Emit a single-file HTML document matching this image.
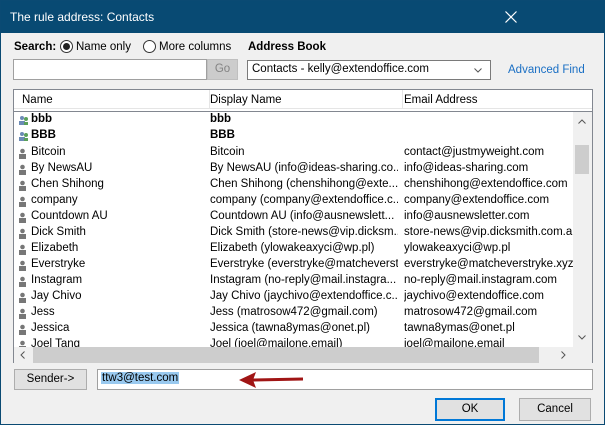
<!DOCTYPE html>
<html><head><style>
*{margin:0;padding:0;box-sizing:border-box}
body{width:605px;height:425px;overflow:hidden;font-family:"Liberation Sans",sans-serif;font-size:11.5px;color:#000;background:#f0f0f0;position:relative}
.win{position:absolute;left:0;top:0;width:605px;height:425px;border:1px solid #0a4a73;background:#f0f0f0}
.title{position:absolute;left:0;top:0;width:605px;height:32px;background:#084a73;color:#fff;font-size:12px}
.a{position:absolute;white-space:nowrap}
.box{position:absolute;background:#fff;border:1px solid #7a7a7a}
.btn{position:absolute;background:#e1e1e1;border:1px solid #adadad;text-align:center}
.radio{position:absolute;width:13px;height:13px;border:1px solid #333;border-radius:50%;background:#fff}
.row{position:absolute;left:0;height:16px;width:558px}
.row span{position:absolute;top:1px;white-space:nowrap;overflow:hidden}
.ic{position:absolute;left:4px;top:3px;width:9px;height:11px}
</style></head><body>
<div class="win">
<div class="title"><span class="a" style="left:9px;top:9px">The rule address: Contacts</span>
<svg class="a" style="left:504px;top:10px" width="12" height="12" viewBox="0 0 12 12"><path d="M0.5 0.5L11.5 11.5M11.5 0.5L0.5 11.5" stroke="#fff" stroke-width="1.2"/></svg></div>

<span class="a" style="left:13px;top:40px;font-weight:bold">Search:</span>
<div class="radio" style="left:59px;top:39px"><div style="position:absolute;left:2px;top:2px;width:7px;height:7px;border-radius:50%;background:#222"></div></div>
<span class="a" style="left:75px;top:40px">Name only</span>
<div class="radio" style="left:142px;top:39px"></div>
<span class="a" style="left:158px;top:40px">More columns</span>
<span class="a" style="left:247px;top:40px;font-weight:bold">Address Book</span>

<div class="box" style="left:12px;top:58px;width:194px;height:21px;border-color:#a0a0a0"></div>
<div class="btn" style="left:206px;top:58px;width:31px;height:21px;background:#cccccc;border-color:#bfbfbf;color:#838383;line-height:19px">Go</div>
<div class="box" style="left:246px;top:59px;width:244px;height:20px;border-color:#7a7a7a"><span class="a" style="left:4px;top:2px">Contacts - kelly@extendoffice.com</span>
<svg class="a" style="left:226px;top:7px" width="8" height="5" viewBox="0 0 8 5"><path d="M0.5 0.5L4 4L7.5 0.5" stroke="#555" fill="none"/></svg></div>
<span class="a" style="left:507px;top:63px;color:#1a6fc4">Advanced Find</span>

<div class="box" style="left:12px;top:88px;width:580px;height:274px;border-color:#828790">
 <div style="position:absolute;left:0;top:0;width:578px;height:19px;background:#fff;border-bottom:1px solid #e5e5e5"></div>
 <span class="a" style="left:8px;top:4px">Name</span>
 <div class="a" style="left:195px;top:0;width:1px;height:19px;background:#e5e5e5"></div>
 <span class="a" style="left:196px;top:4px">Display Name</span>
 <div class="a" style="left:388px;top:0;width:1px;height:19px;background:#e5e5e5"></div>
 <span class="a" style="left:390px;top:4px">Email Address</span>
 <div style="position:absolute;left:0;top:21px;width:578px;height:1px;background:#828790"></div>
 <div style="position:absolute;left:0;top:22px;width:559px;height:235px;overflow:hidden">
  <div class="row" style="top:0"><svg class="ic" viewBox="0 0 9 11" style="width:11px"><circle cx="3" cy="3" r="2" fill="#6c8bb5"/><rect x="0" y="6" width="6" height="4" fill="#6c8bb5"/><circle cx="7" cy="4" r="2" fill="#5aa05a"/><rect x="5" y="7" width="4" height="3" fill="#5aa05a"/></svg><span style="left:17px;font-weight:bold">bbb</span><span style="left:196px;font-weight:bold">bbb</span></div>
  <div class="row" style="top:16px"><svg class="ic" viewBox="0 0 9 11" style="width:11px"><circle cx="3" cy="3" r="2" fill="#6c8bb5"/><rect x="0" y="6" width="6" height="4" fill="#6c8bb5"/><circle cx="7" cy="4" r="2" fill="#5aa05a"/><rect x="5" y="7" width="4" height="3" fill="#5aa05a"/></svg><span style="left:17px;font-weight:bold">BBB</span><span style="left:196px;font-weight:bold">BBB</span></div>
  <div id="rows"></div>
 </div>
 <div style="position:absolute;left:559px;top:22px;width:19px;height:235px;background:#f0f0f0">
  <svg class="a" style="left:5px;top:7px" width="8" height="5" viewBox="0 0 8 5"><path d="M0.5 4.5L4 1L7.5 4.5" stroke="#555" fill="none"/></svg>
  <div class="a" style="left:2px;top:33px;width:14px;height:29px;background:#cdcdcd"></div>
  <svg class="a" style="left:5px;top:223px" width="8" height="5" viewBox="0 0 8 5"><path d="M0.5 0.5L4 4L7.5 0.5" stroke="#555" fill="none"/></svg></div>
 <div style="position:absolute;left:0;top:257px;width:559px;height:16px;background:#f0f0f0">
  <svg class="a" style="left:6px;top:4px" width="5" height="8" viewBox="0 0 5 8"><path d="M4.5 0.5L1 4L4.5 7.5" stroke="#555" fill="none"/></svg>
  <div class="a" style="left:19px;top:0;width:506px;height:16px;background:#cdcdcd"></div>
  <svg class="a" style="left:547px;top:4px" width="5" height="8" viewBox="0 0 5 8"><path d="M0.5 0.5L4 4L0.5 7.5" stroke="#555" fill="none"/></svg></div>
 <div style="position:absolute;left:559px;top:257px;width:19px;height:16px;background:#f0f0f0"></div>
</div>

<div class="btn" style="left:13px;top:368px;width:73px;height:21px;line-height:19px">Sender-&gt;</div>
<div class="box" style="left:96px;top:368px;width:496px;height:21px;border-color:#a0a0a0"><span class="a" style="left:3px;top:2px;background:#99c9ef;padding:0 1px">ttw3@test.com</span></div>
<svg class="a" style="left:238px;top:370px" width="66" height="18" viewBox="0 0 66 18"><line x1="14" y1="9" x2="64" y2="8" stroke="#a01515" stroke-width="3"/><polygon points="0,9 17,1 14,9 17,17" fill="#a01515"/></svg>

<div class="btn" style="left:434px;top:397px;width:70px;height:23px;border:2px solid #0078d7;line-height:19px">OK</div>
<div class="btn" style="left:518px;top:397px;width:72px;height:23px;line-height:21px">Cancel</div>
</div>
<script>
var d=[["Bitcoin","Bitcoin","contact@justmyweight.com"],["By NewsAU","By NewsAU (info@ideas-sharing.co...","info@ideas-sharing.com"],["Chen Shihong","Chen Shihong (chenshihong@exte...","chenshihong@extendoffice.com"],["company","company (company@extendoffice.c...","company@extendoffice.com"],["Countdown AU","Countdown AU (info@ausnewslett...","info@ausnewsletter.com"],["Dick Smith","Dick Smith (store-news@vip.dicksm...","store-news@vip.dicksmith.com.au"],["Elizabeth","Elizabeth (ylowakeaxyci@wp.pl)","ylowakeaxyci@wp.pl"],["Everstryke","Everstryke (everstryke@matcheverst...","everstryke@matcheverstryke.xyz"],["Instagram","Instagram (no-reply@mail.instagra...","no-reply@mail.instagram.com"],["Jay Chivo","Jay Chivo (jaychivo@extendoffice.c...","jaychivo@extendoffice.com"],["Jess","Jess (matrosow472@gmail.com)","matrosow472@gmail.com"],["Jessica","Jessica (tawna8ymas@onet.pl)","tawna8ymas@onet.pl"],["Joel Tang","Joel (joel@mailone.email)","joel@mailone.email"]];
var h="";d.forEach(function(r,i){h+='<div class="row" style="top:'+(33+i*16)+'px"><svg class="ic" viewBox="0 0 9 11"><circle cx="4.5" cy="3" r="2.3" fill="#777"/><rect x="1" y="6" width="7" height="5" fill="#777"/></svg><span style="left:17px;width:175px">'+r[0]+'</span><span style="left:196px;width:188px">'+r[1]+'</span><span style="left:390px;width:169px">'+r[2]+'</span></div>';});
document.getElementById("rows").outerHTML=h;
</script>
</body></html>
